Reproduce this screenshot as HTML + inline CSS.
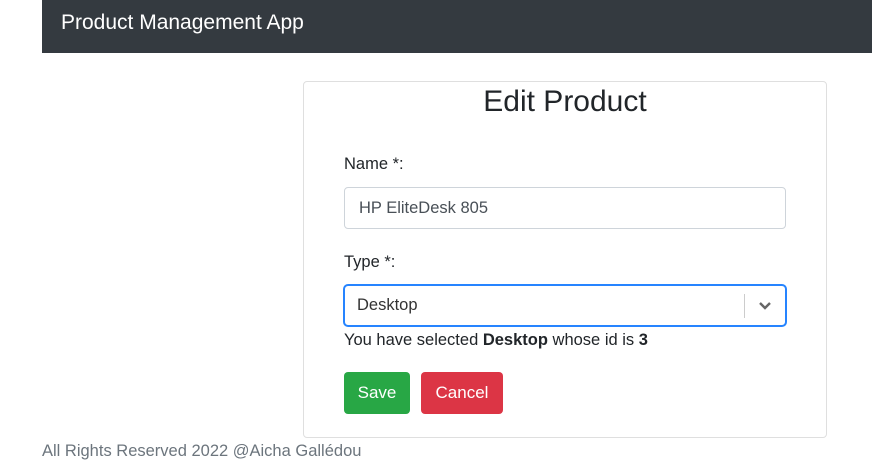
<!DOCTYPE html>
<html><head><style>
body{margin:0;width:872px;height:470px;background:#fff;font-family:"Liberation Sans",sans-serif;color:#212529;position:relative;overflow:hidden}
.nav{position:absolute;left:42px;top:0;width:830px;height:53px;background:#343a40}
.nav span{position:absolute;left:19px;top:11px;color:#fff;font-size:21px}
.card{position:absolute;left:303px;top:81px;width:522px;height:355px;border:1px solid #dfdfdf;border-radius:4px}
h1{position:absolute;left:0;right:0;top:84px;margin:0;text-align:center;font-size:30px;font-weight:500;line-height:36px}
.lbl{position:absolute;left:344px;font-size:16.5px}
.inp{position:absolute;left:344px;width:440px;height:41px;border:1px solid #ced4da;border-radius:4px;box-sizing:border-box}
.inp span{position:absolute;left:14px;top:11px;font-size:16.5px;color:#495057}
.sel{position:absolute;left:343px;top:284px;width:444px;height:43px;border:2px solid #2684ff;border-radius:5px;box-sizing:border-box}
.sel span{position:absolute;left:12px;top:10px;font-size:16.5px;color:#333}
.sep{position:absolute;left:399px;top:8px;width:1px;height:24px;background:#ccc}
.btn{position:absolute;top:372px;height:42px;border-radius:4px;color:#fff;font-size:17px;line-height:42px;text-align:center}
.foot{position:absolute;left:42px;top:442px;font-size:16.5px;color:#6c757d}
</style></head><body>
<div class="nav"><span>Product Management App</span></div>
<div class="card"></div>
<h1 style="left:303px;width:524px">Edit Product</h1>
<div class="lbl" style="top:155px">Name *:</div>
<div class="inp" style="top:187px;width:442px;height:42px"><span>HP EliteDesk 805</span></div>
<div class="lbl" style="top:253px">Type *:</div>
<div class="sel"><span>Desktop</span><div class="sep"></div>
<svg style="position:absolute;left:413px;top:15px" width="14" height="10" viewBox="0 0 14 10"><path d="M2 2l5 5 5-5" fill="none" stroke="#666" stroke-width="2.4"/></svg></div>
<div class="lbl" style="top:331px">You have selected <b>Desktop</b> whose id is <b>3</b></div>
<div class="btn" style="left:344px;width:66px;background:#28a745">Save</div>
<div class="btn" style="left:421px;width:82px;background:#dc3545">Cancel</div>
<div class="foot">All Rights Reserved 2022 @Aicha Gallédou</div>
</body></html>
